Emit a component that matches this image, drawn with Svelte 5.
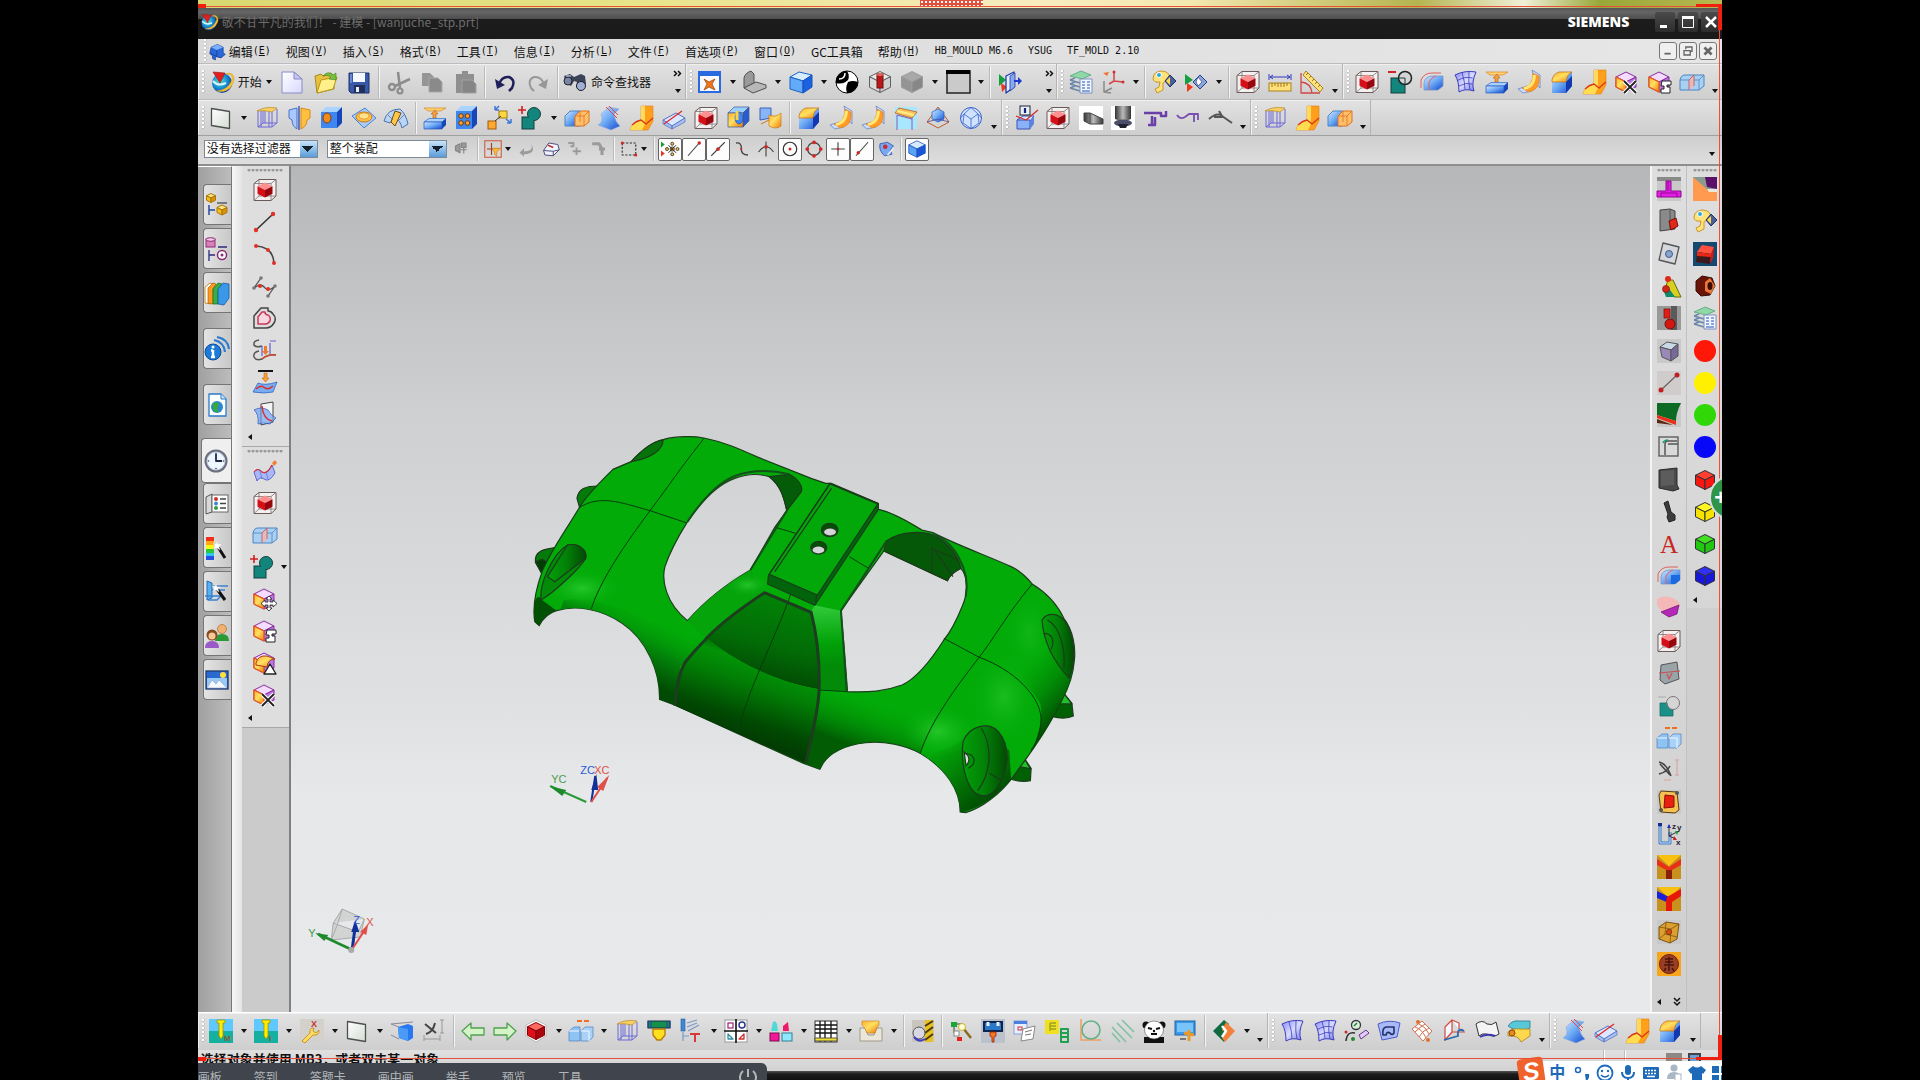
<script>
  const P = (d, f = 'none', s = 'none', w = 1) =>
    `<path d="${d}" fill="${f}" stroke="${s}" stroke-width="${w}" stroke-linejoin="round"/>`;
  const C = (x, y, r, f = 'none', s = 'none', w = 1) =>
    `<circle cx="${x}" cy="${y}" r="${r}" fill="${f}" stroke="${s}" stroke-width="${w}"/>`;
  const R = (x, y, w, h, f = 'none', s = 'none', sw = 1) =>
    `<rect x="${x}" y="${y}" width="${w}" height="${h}" fill="${f}" stroke="${s}" stroke-width="${sw}"/>`;
  const E = (x, y, a, b, f = 'none', s = 'none', w = 1) =>
    `<ellipse cx="${x}" cy="${y}" rx="${a}" ry="${b}" fill="${f}" stroke="${s}" stroke-width="${w}"/>`;
  const T = (x, y, t, f, size = 8) =>
    `<text x="${x}" y="${y}" fill="${f}" font-size="${size}">${t}</text>`;

  // Isometric cube: centre, half width, then top / left / right colours
  const cube = (x, y, w, t, l, r, s = 'none') =>
    P(`M${x - w} ${y - w / 2}L${x} ${y - w}L${x + w} ${y - w / 2}L${x} ${y}Z`, t, s) +
    P(`M${x - w} ${y - w / 2}L${x} ${y}V${y + w}L${x - w} ${y + w / 2}Z`, l, s) +
    P(`M${x + w} ${y - w / 2}L${x} ${y}V${y + w}L${x + w} ${y + w / 2}Z`, r, s);

  // Oblique box: origin, width, height, depth
  const box = (x, y, w, h, d, f, t, r, s = 'none') =>
    P(`M${x} ${y}L${x + d} ${y - d}H${x + w + d}L${x + w} ${y}Z`, t, s, 0.7) +
    P(`M${x + w} ${y}L${x + w + d} ${y - d}V${y + h - d}L${x + w} ${y + h}Z`, r, s, 0.7) +
    R(x, y, w, h, f, s, 0.7);

  const wireRed = P('M1 5.500L6 1.500H23V18L18 22.500H1Z', '#f4f0f0', '#6a5a5a') + P('M1 5.500H18V22.500M18 5.500L23 1.500M6 1.500V18H23M6 18L1 22.500', 'none', '#7d7070', 0.8) +
    cube(12, 12, 7.5, '#ff8f8f', '#d50f18', '#98060d');
  const disk = P('M1 16L6 12.500H23L19 16Z', '#a9d2ff', '#3569c8', 0.7) + P('M1 16H19V23H1Z', 'url(#g-blue)', '#2858c0', 0.7) + P('M19 16L23 12.500V19L19 23Z', '#1747b8');
  const orangeCube = cube(11, 12, 10, '#f3dcff', '#ffb52b', '#b77ae0', '#8a2aa0') + P('M1 7L11 12V22L1 17Z', 'url(#g-orange)', '#e4581a', 1.3);
  const boot = P('M11 0H23V15L18 24H0Q2 16 11 14Z', '#ffa01c', '#e08010', 0.6) + P('M11 0H15V16L11 14Z', '#ffd95a') + P('M0 24Q2 16 11 14L15 18L12 24Z', '#ffdc50') + P('M2 19Q6 15 11 14L16 18L23 12', 'none', '#d9381a', 1.3);
  const mesh = (n) => P('M2 5Q12 0 23 2Q18 13 21 21Q12 18 6 22Q6 11 2 5Z', 'url(#g-mesh)', '#3c3cb8') + P(n ? 'M9 2.500Q12 12 12 19.500M16 2Q15 12 17 20M4.500 10.500Q12 6 19.500 8M6 16Q13 12 19 14' : 'M9 3Q12 12 12 20M16 2Q15 12 17 20', 'none', '#3c3cb8', 0.8);
  const sweep = P('M0 19L9 16L14 21L5 23Z', '#c8dcff', '#5a7cc0', 0.7) + P('M14 0L22 5V18L17 12Z', '#c8dcff', '#5a7cc0', 0.7) + P('M4 18Q15 17 15 3L21 6Q23 20 10 22Z', '#ff9a28', '#d87818', 0.5) + P('M6 18.500Q16 17 16.500 5', 'none', '#ffe870', 3);
  const blend = P('M2 8Q4 3 9 2H22V16L16 23H2Z', 'url(#g-blue)') + P('M2 10Q3 4 9 2H22Q17 4 16 12H2Z', 'url(#g-orange)', '#bd6c14', 0.7) + P('M16 12L22 6V16L16 23Z', '#1238b0');
  const wireCol = P('M3 5V21H17V5M8 3V17H22V3M3 21L8 17M17 21L22 17M6 5V21M10 5V17M14 5V21', 'none', '#6a6ad8') + P('M2 5Q10 0 22 2L17 6Q9 4 2 5Z', '#f8cf60', '#b88a28', 0.7);
  const layers = P('M1 6L12 1L22 5L13 9Z', '#8fd8a8', '#4a9a70', 0.7) + P('M1 10L6 8M1 14L6 12M1 18L6 16M1 10L11 13M1 14L11 17M1 18L11 21', 'none', '#6a86a8', 1.4) + P('M11 9H23V23H11Z', '#f0f6ff', '#7a90c0') + P('M13 12H16M18 12H21M13 15H16M18 15H21M13 18H16M18 18H21M13 21H21', 'none', '#6a8ad0', 1.3);
  const key = P('M1 8Q2 1 10 1Q19 2 17 9Q13 11 11 13L11 20L5 23L3 19L7 17L8 12Q1 13 1 8Z', '#ffe27a', '#c8962a') + C(7, 5, 2.5, '#2aa8d8', '#fff') + P('M13 11L18 5L24 11L18 17Z', '#4a5f98', '#22306a') + P('M14 11L18 7V15Z', '#ffd94d');
  const union = C(15, 8, 6.5, '#12857c', '#173e3c') + R(3, 11, 12, 12, '#12857c', '#173e3c') + P('M10 11H15V14', 'none', '#12857c', 2);
  const boxSplit = P('M0 10Q1 5 5 5H24V16L19 20H0Z', '#a9d0f2', '#4b86c2') + P('M0 10H19V20M19 10L24 5', 'none', '#4b86c2', 0.8) + P('M9 20V10L14 5V16', '#e8b9b9', '#c05050', 0.8);
  const boxPair = P('M0 10L5 5H15V20H0Z', 'url(#g-blue)', '#4b86c2') + P('M10 10L15 5H24V16L19 20H10Z', '#ffbf6a', '#e0701c') + P('M10 10H19V20M19 10L24 5M15 5V16', 'none', '#e0701c', 0.8);
  const draft = P('M4 8L12 1L22 3L17 8Q18 16 23 20L14 24L1 19Q7 16 4 8Z', 'url(#g-blue)', '#8aa8d8', 0.6) + P('M9 1L20 12M12 0L21 9', 'none', '#e04848');
  const trim = P('M1 14L14 7L23 12L10 20Z', '#dce8ff', '#5070c0') + P('M1 14L10 20V23L1 18ZM23 12V16L10 23V20Z', '#a8c0f0', '#5070c0', 0.7) + P('M2 18L20 5', 'none', '#e02828', 1.3);
  const round = P('M4 13Q5 6 13 6H23V16L18 20H4Z', 'url(#g-blue)', '#7894c8', 0.8) + P('M1 18V10Q4 3 12 3H21M9 20V12Q12 7 16 6', 'none', '#e06060');
  const sheet = P('M2.500 2.500L20.500 5.500V22.500L2.500 19.500Z', 'url(#g-sheet)', '#4c514e', 1.3);
  const extrude = P('M1 2H23L18 5H5Z', '#ffd070', '#d88a2a', 0.7) + P('M10 12V8H8L12 4L15 8H13V12Z', '#f0a040', '#b86018', 0.6) + disk;
  const blue3 = cube(12, 12, 11, '#d4eaff', '#5aa2f8', '#1c56d8', '#1c4fb8');
  const flow = (a) => R(0, 0, 24, 24, '#5ec8ff') + R(0, 12, 24, 12, '#16b0a0') + P('M8 1H16V4H14V17L12 20L10 17V4H8Z', '#ffee00', '#a09000', 0.8) + T(15, 22, a, '#8a5a30', 8);
  const disc = (c) => C(12, 12, 11, c);
  const solid = (c, t) => cube(12, 12, 9.5, t, c, c, '#30303a');
  const plate = '#c9c9c9';

  const icons = {
    nx: E(12, 13, 10, 10, 'url(#g-globe)') + P('M3 2L15 3L10 13Z', '#e02020', '#a01010', 0.6) + P('M16 4Q25 4 21 12Q17 20 7 21Q14 23 20 18Q27 9 22 4Q19 2 16 4Z', '#f6c33a', '#d89a1a', 0.5) + P('M3 11Q8 17 16 13', 'none', '#d8f4ff', 2),
    part: P('M3 6L12 2L20 6V14L23 16L17 21L9 19V24L5 22V18L1 15Z', '#2a68d8', '#123a90') + P('M3 6L12 2L20 6L11 10Z', '#7ab0ff') + P('M11 10V19L3 15', 'none', '#123a90'),
    newdoc: P('M2 2H14L22 9V23H2Z', 'url(#g-doc)', '#8a8ac8') + P('M14 2V9H22Z', '#c4c4f0', '#8a8ac8'),
    open: P('M1 6L7 4L9 6L17 3L20 7V19L3 23Z', '#e8c040', '#a88a1a') + P('M3 23L7 10L23 7L19 19Z', '#fff08a', '#b8961a') + P('M9 6Q14 0 19 5L22 3V10L15 9L17 7Q13 4 9 6Z', '#7ac040', '#3e8020', 0.6),
    save: P('M2 3H22V23H4L2 21Z', '#3858a8', '#1c2f6a') + R(6, 3, 12, 9, '#f4f8ff') + R(7, 15, 11, 8, '#20305a') + R(9, 17, 3, 5, '#e8eef8') + P('M4 4V13', 'none', '#7a9ae0', 1.5),
    cut: C(5, 17, 3, 'none', '#8c8c8c', 2.400) + C(13, 21, 2.500, 'none', '#8c8c8c', 2.200) + P('M11 2L13 18M23 9L8 16', 'none', '#8c8c8c', 2.500),
    copy: P('M2 3H10L14 7V16H2Z', '#959595') + P('M9 8H18L22 12V22H9Z', '#8a8a8a', '#a8a8a8'),
    paste: P('M3 4H9V1H15V4H21V23H3Z', '#8f8f8f') + P('M9 10H19L23 14V23H9Z', '#858585', '#a0a0a0'),
    undo: P('M6 14Q9 6 16 7Q23 10 19 18L16 21', 'none', '#1f1f5a', 2.500) + P('M2 9L4 19L12 15Z', '#1f1f5a'),
    redo: P('M18 14Q15 6 8 7Q1 10 5 18L8 21', 'none', '#979797', 2) + P('M22 9L20 19L12 15Z', '#979797'),
    binoc: P('M1 6L7 4L11 7L18 4L22 6L23 14L17 21L13 17L14 12L11 11L8 16L3 13Z', '#3c4258') + C(5, 11, 4, '#7a86a8', '#222') + C(18, 16, 4.500, '#9fb0d8', '#222') + P('M3 6L8 6', 'none', '#8a94b8', 2),
    fit: R(1, 2, 21, 20, '#f8faff', '#2a6ae0', 2) + R(1, 2, 21, 4, '#2a6ae0') + P('M6 9L11 12L17 9L14 14L17 20L11 17L6 20L9 14Z', '#f07820', '#a04808', 0.8),
    hinge: P('M1 18V8Q2 3 8 1L11 4V13L1 18Z', '#9a9a9a', '#505050') + P('M1 18L13 12L23 15V18L10 23Z', '#b8b8b8', '#505050'),
    cube: P('M1 7L10 2L23 5L14 11Z', '#d6ecff', '#1c62c8') + P('M1 7L14 11V23L1 19Z', '#63aaf8', '#1c62c8') + P('M14 11L23 5V17L14 23Z', '#1b62e0', '#1c4fb8'),
    ball: C(12, 12, 11, '#fff', '#000') + P('M12 1A11 11 0 0 0 1 13Q8 15 13 10Q15 5 12 1Z', '#000') + P('M23 12A11 11 0 0 1 12 23Q10 18 13 12Q18 10 23 12Z', '#000') + P('M4 9Q10 9 10 3', 'none', '#fff', 1.500),
    section: cube(12, 12, 10.500, '#e8e8e8', '#dadada', '#cfcfcf', '#606060') + R(9, 4, 6, 14, '#b81818', '#701010') + E(12, 4.500, 3, 1.500, '#e86060'),
    ghost: cube(12, 12, 10.500, '#a8a8a8', '#949494', '#878787', '#9c9c9c'),
    frame: R(1, 1, 23, 22, '#cacaca', '#222', 1.500) + R(0, 0, 24, 4, '#000'),
    door: P('M1 4L8 10L1 16Z', '#14a040') + P('M3 13L9 17L4 22Z', '#f03818') + P('M8 6L16 2V17L8 23Z', '#e8f0ff', '#1c3ab0', 1.300) + P('M12 6L17 3V17L12 21Z', '#8aa8f0', '#1c3ab0', 0.800) + P('M16 10H20V7L24 11L20 15V12H16Z', '#1c3ad0'),
    layers,
    axes: P('M13 2V11L22 12M13 11L8 14', 'none', '#d04848', 1.500) + P('M2 3L8 2L6 6Z', '#f07030') + C(13, 2, 1.500, '#d03030') + C(22, 12, 1.500, '#d03030') + P('M3 11V22L11 18M3 22L10 23', 'none', '#8a8a8a', 1.500),
    key,
    play: P('M1 4L9 10L1 15Z', '#14a040') + P('M3 13L9 17L3 22Z', '#f03818') + P('M9 12L16 5L23 12L16 19Z', '#8aa6d8', '#2a3f8a') + P('M14 7L18 12L14 16L12 12Z', '#fff', '#2a3f8a', 0.700),
    redcube: wireRed,
    ruler: R(1, 13, 22, 8, '#ffe07a', '#a8821a') + P('M4 13V17M7 13V16M10 13V17M13 13V17M16 13V17M19 13V16', 'none', '#806010', 0.800) + P('M1 4V10M23 4V10M2 7H22M5 5L2 7L5 9M19 5L22 7L19 9', 'none', '#2a3ac0'),
    angle: P('M1 3V23H20M1 12Q11 13 12 23', 'none', '#d04848', 1.300) + P('M6 1L23 18L20 22L3 5Z', '#ffe07a', '#a8821a') + P('M8 3L6 5M11 6L9 8M14 9L12 11M17 12L15 14M20 15L18 17', 'none', '#806010', 0.800),
    subtract: P('M0 2H8', 'none', '#d02020', 2) + R(3, 8, 14, 15, '#12857c', '#173e3c') + C(17, 8, 6.500, '#d4d4d4', '#222', 1.500) + P('M11 8H17V14', 'none', '#173e3c'),
    round,
    mesh: mesh(true),
    mesh0: mesh(false),
    extrude,
    sweep,
    blend,
    boot,
    delcube: orangeCube + P('M9 11L21 23M21 11L9 23', 'none', '#fff', 4) + P('M9 11L21 23M21 11L9 23', 'none', '#222', 1.800),
    repcube: orangeCube + P('M14 11H23V15H19V17H22V23H13V19H16V16H13Z', '#fff', '#222'),
    movecube: orangeCube + P('M16 9L19 12H17V15H20V13L24 16.500L20 20V18H17V21H19L16 24L13 21H15V18H12V20L8 16.500L12 13V15H15V12H13Z', '#fff', '#222', 0.800),
    facecube: orangeCube + P('M3 12Q5 4 14 5L22 8Q15 8 14 16L3 14Z', 'url(#g-orange)', '#a83a1a') + P('M17 13L23 23H11Z', '#fff', '#222', 1.400),
    boxsplit: boxSplit,
    boxpair: boxPair,
    sheet,
    wirecol: wireCol,
    mirror: P('M1 4L9 2V23Q4 20 4 14L1 12Z', '#a8c8ff', '#4a72c8') + P('M13 2L22 4V12L19 14Q19 20 13 23Z', '#ffc040', '#d88a1a') + P('M11 0V24', 'none', '#2a4ab0', 1.300),
    hole: box(1, 6, 16, 16, 5, '#3f87f0', '#a9d4ff', '#1746b8') + E(7, 12, 4, 5, '#f08a1a', '#8a3a08'),
    emboss: P('M0 10L13 2L24 12L12 22Z', '#a8ccf8', '#4a82d0') + E(12, 11, 8, 5, '#ffbe48', '#c8781a') + E(12, 10, 5, 3, '#ffe48a', '#d89028', 0.700),
    fan: P('M0 15Q3 3 16 3Q22 8 24 18L18 22Q16 14 12 13Q8 13 6 17Z', '#b9d5f5', '#4a72b0') + P('M11 5L17 7L11 20L7 16Z', '#ffc848', '#704a10') + P('M4 9L9 14M20 9L15 14', 'none', '#6a6a88', 0.800),
    pattern: box(1, 5, 16, 18, 5, '#3f87f0', '#a9d4ff', '#1746b8') + C(6, 10, 2.300, '#ffa030', '#703808') + C(12.500, 10, 2.300, '#ffa030', '#703808') + C(6, 17, 2.300, '#ffa030', '#703808') + C(12.500, 17, 2.300, '#ffa030', '#703808'),
    movecopy: R(12, 5, 8, 7, '#ffd840', '#a07a10') + R(1, 15, 8, 8, '#ffa830', '#a05a10') + P('M8 15L14 10', 'none', '#333') + P('M8 4L12 0M8 4V0M8 4H12M19 13L24 17M24 17V13M24 17H20', 'none', '#3a78d8', 1.500),
    union: P('M3 0V8M-1 4H7', 'none', '#d02020', 1.600) + union,
    draft,
    trim,
    tank: box(1, 7, 15, 14, 6, 'url(#g-orange)', '#9ad0ff', '#2a5ad0', '#405a90') + E(12, 12, 4, 6, '#3f87f0', '#2a4a98', 0.700) + P('M10 5V14', 'none', '#ffd040', 3),
    wrap: P('M1 2H12V12L1 14Z', '#8ab4f8', '#3a62b8') + P('M10 9Q17 12 22 7V20Q17 24 10 20Z', 'url(#g-orange)', '#c8781a', 0.700) + P('M2 18L10 14', 'none', '#c8781a'),
    fold: R(1, 1, 22, 22, '#a8e8ff') + P('M1 7L5 2L23 6L18 12Z', '#ffc060', '#b8601a', 0.800) + P('M3 9V24M18 12V24M3 9L18 13', 'none', '#8a5ab0') + P('M3 5L20 9', 'none', '#fff080', 2),
    pyramid: P('M12 1L23 16L12 22L1 16Z', 'none', '#c05a30') + P('M6 6L12 3L18 6V13L12 16L6 13Z', 'url(#g-blue)', '#2858c0', 0.700) + P('M1 16L12 13L23 16', 'none', '#4a4a90', 0.800),
    gem: C(12, 12, 10.500, '#cfe2ff', '#3a62c8') + P('M12 1.500L5 8L12 13L19 8ZM5 8L4 17L12 22.500L20 17L19 8M12 13V22.500M1.500 12L5 8M22.500 12L19 8', 'none', '#3a62c8', 0.800),
    inspect: P('M3 14L9 10H20L16 15Z', '#dce6ff', '#3a52b8') + P('M3 14H16V23H3Z', '#8ab0f8', '#3a52b8') + P('M16 15L20 10V18L16 23Z', '#5a84e0') + P('M2 10L12 14L24 4', 'none', '#d03030', 1.300) + R(6, 0, 10, 9, '#e8f0f8', '#223') + P('M11 2V7', 'none', '#14207a', 2.200),
    nozzle: R(0, 0, 24, 24, '#fff') + P('M5 7H11L24 13V18H11L5 15Z', 'url(#g-steel)', '#444') + P('M11 7V17', 'none', '#444'),
    punch: R(0, 0, 24, 24, '#fff') + P('M4 0H20V13Q12 17 4 13Z', 'url(#g-steel)') + E(12, 17, 9, 3.500, '#4a4e68') + P('M7 18H17L15 22H9Z', '#20222e'),
    clampa: P('M1 7H18V10H23V5M9 10V19M5 19H12V11', 'none', '#6a3fa8', 2.500),
    clampb: P('M1 9Q4 14 9 11L13 8H22V14M18 8V16', 'none', '#7a4fb0', 1.800),
    clampc: P('M1 13Q9 6 14 10L24 17M11 5L14 10M6 11L16 11', 'none', '#555', 2),
    assy: cube(6, 5, 4.500, '#ffe680', '#f8bc20', '#d8940a', '#a8760a') + P('M4 12V22M4 17H10', 'none', '#2a4aa0', 1.500) + cube(17, 17, 5, '#ffe680', '#f8bc20', '#d8940a', '#a8760a') + P('M12 10H22', 'none', '#222'),
    constr: R(1, 2, 9, 8, '#d880b8', '#8a2a70') + E(5.500, 2.500, 4.500, 1.800, '#f8c8e8', '#8a2a70') + P('M4 13V24M4 18H10M13 10H22', 'none', '#2a2a80', 1.300) + C(17, 18, 4.500, '#fff', '#8a2a70', 1.500) + C(17, 18, 1.500, '#8a2a70'),
    books: P('M0 6L5 2L8 3L6 8V23L0 22Z', '#fff', '#c88a2a') + P('M3 7L8 2L11 3L8 8V23L3 22Z', '#ff9a20', '#b05a08', 0.700) + P('M8 8L13 2L17 3L13 9V23L8 23Z', '#38b048', '#146a20', 0.700) + P('M13 8L18 2L24 3V17L19 24L13 23Z', '#3a98e8', '#1050a0', 0.700),
    news: C(8, 15, 8, '#1c7ad8', '#0c4a98') + P('M8 13V20M6 20H10M6 13.500H8', 'none', '#fff', 2.500) + C(8, 10, 1.500, '#fff') + P('M9 3Q19 5 20 15M12 0Q23 2 24 12', 'none', '#2a7ad0', 2.200),
    web: P('M4 1H16L21 6V23H4Z', '#fff', '#2a7ac8', 1.300) + P('M16 1V6H21', '#cfe4ff', '#2a7ac8') + C(12, 14, 6, '#2a88d0') + P('M8 10Q12 8 14 11L12 16L14 19Q10 20 8 17Z', '#38a838'),
    clock: C(12, 12, 11.500, '#6a7080') + C(12, 12, 9, '#eef6ff', '#c8d4e4') + P('M12 5V12H18', 'none', '#1c2a48', 1.800) + C(12, 4.500, 0.800, '#445') + C(12, 19.500, 0.800, '#445') + C(4.500, 12, 0.800, '#445') + C(19.500, 12, 0.800, '#445'),
    roles: P('M1 5L7 2V20L1 22Z', '#d8d8d8', '#555') + R(7, 3, 16, 17, '#fff', '#666') + C(11, 7, 2, '#d03030') + C(11, 11.500, 2, '#3a8ad0') + C(11, 16, 2, '#30a040') + P('M15 7H21M15 11.500H21M15 16H21', 'none', '#444', 1.500),
    wand: R(1, 1, 8, 5, '#f03018') + R(1, 5, 8, 4, '#ffa818') + R(1, 9, 8, 4, '#f8f818') + R(1, 13, 8, 4, '#28c838') + R(1, 17, 8, 4, '#28c8f0') + R(1, 20, 8, 4, '#2850e0') + P('M13 11L20 22', 'none', '#111', 3) + P('M12 4L13 8L17 8L14 11L15 14L12 12L8 13L10 10L8 7L11 8Z', '#fff', '#ccc', 0.500),
    wandb: P('M2 1L7 3V18L2 20Z', '#58b0f0', '#2868b0') + P('M7 6H23M7 10H20M0 16H16L12 20H3', 'none', '#3a80d0', 1.500) + P('M12 9L20 20', 'none', '#111', 3) + P('M11 3L12 7H16L13 9L14 12L11 10L8 12L9 8L7 6H10Z', '#fff', '#ccc', 0.500),
    people: C(17, 5, 4.500, '#f0b070', '#a06020', 0.600) + P('M10 17Q10 10 17 10Q24 10 24 17Z', '#2a9a38') + C(7, 11, 5.500, '#8a4a20') + C(7, 12, 3.500, '#f6c898') + P('M0 24Q0 17 7 17Q14 17 14 24Z', '#9a5ac8'),
    photo: R(1, 3, 22, 18, '#2a6ad0', '#223a6a', 1.300) + R(2, 10, 20, 10, '#9ac8f4') + C(18, 7, 3, '#ffe040') + P('M2 20L7 12L11 16L14 12L22 20Z', '#f4f8ff', '#8aa0c0', 0.600),
    line: P('M3 20L20 4', 'none', '#333', 1.600) + C(3, 20, 2.200, '#e03028') + C(20, 4, 2.200, '#e03028'),
    arc: P('M3 4Q20 5 21 21', 'none', '#444', 1.500) + C(3, 4, 2, '#e03028') + C(15, 8, 2, '#e03028') + C(21, 21, 2, '#e03028'),
    spline: P('M1 14L8 4M1 14L6 11Q10 11 12 14Q16 18 22 12M15 22L22 12', 'none', '#555', 1.300) + C(1, 14, 1.800, '#777') + C(8, 4, 1.800, '#777') + C(15, 22, 1.800, '#777') + C(22, 12, 1.800, '#777') + C(7, 12, 2, '#e03028') + C(15, 15, 2, '#e03028'),
    offset: P('M1 10L8 2H15V5Q18 5 20 8Q24 12 21 17Q18 22 13 22H1Z', 'none', '#444', 1.500) + P('M5 11L9 6H12Q12 9 15 9Q18 11 17 15Q15 18 12 18H5Z', '#f8d8e0', '#c83858', 1.500),
    bridge: P('M6 2Q0 3 1 7Q3 10 9 8M6 13Q0 14 1 19Q3 23 9 21Q15 16 23 17', 'none', '#555', 1.500) + P('M9 8V18M17 5V16M17 3H23', 'none', '#6060d8', 1.200) + P('M9 21Q15 16 23 17', 'none', '#e04828', 1.300) + P('M11 8H14V13H16L12.500 17L9 13H11Z', '#f07828'),
    project: P('M5 1H20', 'none', '#111', 2) + P('M11 3H14V8H16L12.500 12L9 8H11Z', '#f8a030', '#b05a10', 0.500) + P('M5 13Q12 16 24 12L20 22Q12 24 0 22Z', '#78aef0', '#2858c0', 0.700) + P('M3 19Q8 14 12 18Q16 20 20 16', 'none', '#d83030', 1.500),
    section2: P('M8 2L20 0V20L8 23Z', '#f4f4f4', '#444') + P('M1 8Q8 4 15 8Q18 14 23 16L17 22Q10 20 5 22Q6 12 1 8Z', '#6aa0f0aa', '#2858c0', 0.700) + P('M9 4Q10 17 19 19', 'none', '#d83030', 1.500),
    ribbon: P('M1 13Q5 8 9 13Q14 16 19 6L22 14Q16 24 11 20Q7 17 4 22Z', '#a9b9f8', '#5a6ad0') + P('M1 13Q5 8 9 13Q14 16 19 6', 'none', '#d83030', 1.200) + P('M19 4L22 1L24 4L21 7Z', '#f08030') + P('M7 12L9 20M13 13L15 20', 'none', '#5a6ad0', 0.700),
    // right-hand mould tools
    railm: R(0, 0, 24, 24, plate) + R(0, 0, 24, 4, '#8a8a8a') + P('M9 4H14V14H24V20H0V14H9Z', '#e81ce8', '#8a0c8a') + P('M4 20V16H20V20M11 4V14', 'none', '#8a0c8a'),
    postm: P('M3 1L13 0L18 2V20L3 22Z', '#8a8a8a', '#444') + P('M13 0V21', 'none', '#555') + P('M12 12L19 9L21 17L14 21Z', '#e02818', '#7a0c08'),
    platem: P('M6 1L22 5L18 22L2 18Z', '#d4d8dc', '#555', 1.300) + C(12, 12, 3.500, '#88a4cc', '#445a88'),
    pinm: P('M11 6L16 6L24 23H17L9 12Z', '#d8d020', '#6a6a10') + P('M6 15L11 13L18 23H9Z', '#108a6a') + C(11, 5, 3, '#e02818') + C(9, 15, 3.500, '#d02818', '#7a0c08', 0.600),
    slidem: R(0, 0, 24, 24, '#999') + P('M14 0H20V24H14Z', '#5a5a5a') + R(7, 3, 6, 9, '#e02018', '#7a0c08', 0.700) + C(13, 18, 5, '#d01810', '#7a0c08'),
    blockm: R(0, 0, 24, 24, plate) + P('M3 8L10 3L21 5L14 11Z', '#c8d8e4', '#555') + P('M3 8L14 11V22L5 18Z', '#9a88b8', '#555') + P('M14 11L21 5V17L14 22Z', '#7a689a', '#555'),
    linem: R(0, 0, 24, 24, '#d0cccc') + P('M4 19L20 4', 'none', '#666', 1.300) + C(4, 19, 2.500, '#c02020') + C(20, 4, 2.500, '#c02020'),
    greenm: R(0, 0, 24, 24, plate) + P('M0 0H24Q19 10 19 18L0 12Z', '#0c6a24') + P('M0 12L19 18V22L0 15Z', '#e83018') + P('M0 16L16 22L0 20Z', '#5a2a10'),
    cornerm: R(2, 2, 19, 19, 'none', '#555', 1.300) + P('M8 20V9Q8 6 11 6H20M11 9H21', 'none', '#555', 1.500) + P('M6 8Q7 5 11 5', 'none', '#14a080', 1.500),
    darkm: P('M2 2L20 0V17L22 21L16 23L2 20Z', '#4a4a4a', '#2a2a2a') + P('M4 3L17 2V17L4 18Z', '#5c5c5c'),
    hammerm: P('M7 3L11 1L14 12L18 15V20L12 22L10 17L11 14Z', '#3c3c3c', '#222'),
    textm: `<text x="3" y="21" font-family="Liberation Serif" font-size="25" font-weight="normal" fill="#c82820">A</text>`,
    roundm: round + P('M14 11H23V16L18 20H14Z', '#1c6ae0'),
    wedgem: P('M0 2Q10 -4 22 5L23 10L6 16L0 8Z', '#f4b8b8') + P('M4 15L22 8L20 17L12 20Z', '#b428b8', '#6a1070', 0.700),
    wirebox: P('M4 4L20 1L22 18L8 23L3 19Z', '#9aa4a8', '#555') + P('M2 12L23 10M10 13L12 18L15 12', 'none', '#c85050', 1.200),
    cutm: P('M1 3H9', 'none', '#aaa') + P('M3 9H10A7 7 0 0 0 16 16V22H3Z', '#1b9088', '#1a6a64', 0.800) + C(16, 9, 6.500, 'none', '#777'),
    splitm: P('M8 2H13M15 2H20', 'none', '#f07020', 2) + P('M0 12L5 8H11V22H0Z', '#8ec4f4', '#4a80c0', 0.700) + P('M12 12L16 8H24V18L20 22H12Z', '#a9d2f8', '#4a80c0', 0.700) + P('M0 12H10M12 12H20V22', 'none', '#f4f8ff'),
    trimm: P('M2 4Q9 5 14 18M2 16Q10 14 13 8M3 6L13 17', 'none', '#444', 1.600) + P('M20 2V17M18 2H22M18 17H22M7 22H14', 'none', '#d8a0a0'),
    framem: R(0, 0, 24, 24, plate) + P('M4 1L20 2L22 20L18 23L4 22L2 5Z', '#f4c050', '#5a3a10') + P('M8 5L17 6V17L7 18Z', '#e82010', '#8a1008') + C(4, 20, 2, '#555') + C(20, 3, 2, '#555'),
    csysm: P('M3 1V20H13V9', 'none', '#3a7ac0', 3) + P('M3 4V20H13V9', 'none', '#cfe0f4', 1) + R(1, 0, 4, 3, '#1a2a90') + P('M12 13V2M12 13L20 9M12 13L19 16', 'none', '#333') + P('M12 1L10 5H14Z', '#2030c0') + P('M22 8L18 8L20 12Z', '#20a030') + P('M20 17L17 13L16 17Z', '#d02020') + T(15, 6, 'z', '#223', 8) + T(20, 7, 'y', '#223', 8) + T(19, 22, 'x', '#223', 8),
    ym: R(0, 0, 24, 24, '#c8901c') + P('M0 0H24L12 11Z', '#f8c010') + P('M0 4L12 12L24 4V10L15 15V24H9V15L0 10Z', '#e83018') + R(9, 15, 6, 9, '#8a2008'),
    ymb: R(0, 0, 24, 24, '#c8901c') + P('M0 0H24L12 11Z', '#f8c010') + P('M0 4L12 10V16L0 11Z', '#1c20d8') + P('M10 10L24 2V9L15 15V24H9V14Z', '#e81808'),
    cratem: R(0, 0, 24, 24, plate) + P('M2 7L9 2L22 4L20 19L13 23L2 19Z', '#dca030', '#7a5410') + P('M2 7L14 9L22 4M14 9L13 23M9 2L8 14L2 19M8 14L20 17', 'none', '#7a5410', 0.800) + C(12, 12, 2.500, '#e05010', '#8a2a08'),
    sealm: R(0, 0, 24, 24, '#f8a41c') + C(12, 12, 9.500, '#9a3f24', '#6a2010') + P('M8 7H16M12 5V13M8 10H16M7 13H17M9 16L7 19M15 16L17 19M12 14V19', 'none', '#4a160c', 1.500),
    wedge: R(0, 0, 24, 24, '#8a9a90') + P('M0 0L16 14H24V24H0Z', '#ff9a50') + P('M12 0H24V12L14 10Z', '#5a1068') + P('M14 12H24V15H16Z', '#e8e8e0'),
    key2: key,
    redsolid: R(0, 0, 24, 24, '#144a70') + P('M4 10L9 3L21 5L18 12Z', '#ff5040') + P('M4 10L18 12L17 22L3 20Z', '#3a1a1c') + P('M18 12L21 5L20 16L17 22Z', '#e01810') + P('M4 10L18 12V15L4 14Z', '#e82818'),
    ringsolid: P('M3 7L9 2L19 4L22 12L17 21L8 22L3 17Z', '#6a1408', '#3a0c04') + P('M12 8L17 4L22 12L18 20L12 17Z', '#e87838') + E(17, 12, 2.500, 4, '#3a0c04'),
    layers2: layers,
    red: disc('#ff1808'), yellow: disc('#fff000'), green: disc('#30d808'), blue: disc('#0808f8'),
    cred: solid('#f81810', '#ff4030'), cyel: solid('#f4e400', '#fff820'), cgrn: solid('#20c810', '#40e020'), cblu: solid('#1818d8', '#3030f0'),
    // bottom bar
    flowm: flow('M'), flowi: flow('I'),
    wrenchx: R(0, 0, 24, 24, '#d4d0cc') + P('M2 22L10 14Q9 9 14 9L13 12L16 14L19 11Q19 17 13 16L5 24Z', '#ffdc60', '#c8962a') + T(11, 8, 'X', '#c83030', 9),
    bluewire: P('M1 5L23 3M1 16L9 20M1 5L9 8', 'none', '#8a8a9a') + P('M8 8L18 5L23 7V19L18 22L9 19Z', '#2a78f0') + P('M8 8L18 10V22L9 19Z', '#4a9af8'),
    trimdim: P('M3 5L14 14M4 15Q11 13 13 4', 'none', '#444', 2) + P('M20 1V14M18 1H22M18 14H22M2 16V22M18 16V22M2 20H18', 'none', '#999'),
    prev: P('M1 12L10 4V9H23V16H10V21Z', '#d4f4c8', '#50a050', 1.300),
    next: P('M23 12L14 4V9H1V16H14V21Z', '#d4f4c8', '#50a050', 1.300),
    redhex: P('M12 1L22 6V17L12 23L2 17V6Z', '#fff', '#999', 0.600) + cube(12, 12, 8.500, '#ff6a60', '#e01018', '#a8060c', '#8a0008'),
    screw: R(1, 2, 22, 7, '#14904c', '#14304c') + P('M1 2V9M4 2V9M20 2V9M23 2V9', 'none', '#2a3ab0') + P('M6 10H18V16L14 21H10L6 16Z', '#ffe020', '#b87808', 1.300),
    treet: R(2, 0, 4, 12, '#3a88d8', '#2a5a98', 0.600) + P('M4 13V22M4 17H10M8 4L18 1M8 8L18 4M9 12L20 6', 'none', '#7a9ac8', 1.200) + P('M11 15H21M16 15V23', 'none', '#d83838', 2),
    quad: R(1, 1, 22, 22, '#fff', '#999') + P('M12 0V24M0 12H24', 'none', '#111', 1.600) + R(4, 4, 5, 5, 'none', '#a03080', 1.300) + C(18, 6, 3, 'none', '#2a3a90', 1.500) + P('M4 20V15L9 20Z', 'none', '#2a90a0', 1.300) + P('M15 20L20 15V20Z', 'none', '#d03030', 1.300),
    cores: P('M2 12L4 3Q6 1 8 5L9 12Z', '#50d8d8') + P('M14 12V7L19 3L20 12Z', '#f01868') + R(1, 14, 9, 8, '#f01898', '#800850') + R(13, 14, 10, 8, '#90e8ff', '#308090'),
    table: R(1, 2, 22, 21, '#fff', '#333') + P('M1 6H23M1 10H23M1 14H23M6 2V23M11 2V23M17 2V23', 'none', '#111', 1.300) + P('M1 19H23V22H1Z', '#f0e030', '#554'),
    cavity: P('M1 9H6L9 16H15L18 9H23V22H1Z', '#eae6da', '#a09a8a') + P('M3 2H20V6Q17 9 16 14H8Q6 8 3 6Z', 'url(#g-orange)', '#c8781a', 0.600),
    drill: R(1, 1, 22, 22, '#c9c4bc') + P('M14 1H22V23H14Z', '#e8c020') + P('M14 7L22 2M14 14L22 8M14 21L22 15', 'none', '#4a3a08', 2) + C(8, 14, 6, '#d8d8e4', '#555') + P('M3 18Q8 24 14 20', 'none', '#4040c0', 2),
    nodes: R(2, 3, 6, 5, '#18a838') + P('M5 8V14H9M8 5H14', 'none', '#444') + R(5, 12, 5, 5, '#fff', '#888') + R(8, 18, 5, 4, '#e82018') + P('M14 9L22 19', 'none', '#8a6a20', 2.500) + C(13, 8, 3.500, '#ffffd0', '#c8b040'),
    mount: R(0, 0, 24, 24, '#bcc2cc') + R(3, 3, 18, 9, '#2a78c8', '#0c2450', 2) + P('M7 3V7M17 3V7', 'none', '#e8f0ff', 3) + P('M9 13H15V17L13 18V23H11V18L9 17Z', '#f07820', '#a02010', 0.800),
    notes: R(1, 2, 13, 13, '#e8f0ff', '#8aa0d8') + R(1, 2, 13, 3, '#4a80e0') + P('M10 10L22 7L20 20L8 22Z', '#fff', '#888') + P('M12 13L19 11M12 16L18 15', 'none', '#777') + R(5, 8, 4, 3, 'none', '#d03030'),
    sizes: R(0, 1, 14, 14, '#f0e020') + P('M5 4H11M5 7H11M5 10H11M5 4V12', 'none', '#9aa020', 1.300) + P('M16 10H23V23H16ZM16 14H23M16 18H23', 'none', '#20a050', 2),
    circ: P('M3 0V21H23', 'none', '#f0a060', 1.500) + C(13, 11, 9, 'none', '#60b088', 1.500),
    hatch: P('M2 8L16 23M7 4L22 19M12 1L24 13M2 14L10 23', 'none', '#7fc0a0', 1.500),
    panda: R(2, 18, 20, 6, '#111') + C(4, 6, 3.500, '#111') + C(20, 6, 3.500, '#111') + E(12, 11, 9.500, 9, '#fff', '#555', 0.600) + P('M6 9L10 10M18 9L14 10M9 15H15', 'none', '#111', 2) + C(12, 12, 1.200, '#111'),
    screen: R(1, 2, 20, 14, '#3a9ae8', '#1c62a8') + R(3, 4, 16, 9, '#78c4f8') + P('M6 20H12', 'none', '#777', 2) + P('M10 14L20 16M15 11V22', 'none', '#e89a28', 3),
    logo: P('M12 1L17 5L12 12L16 16L12 23L1 12Z', '#0f6a40') + P('M14 3L23 12L13 23L10 19L14 14L10 11Z', '#f4803a') + P('M10 7L14 12L10 18', 'none', '#fff', 2.500),
    sketch: C(11, 6, 4.500, '#d8f0d8', '#334', 1.300) + P('M9 7L12 4', 'none', '#20802a', 1.500) + P('M1 22Q2 12 10 14', 'none', '#333', 1.500) + C(8, 20, 2, '#208a30') + C(1, 13, 1.500, '#c82828') + P('M14 16L21 11L24 14L16 20Z', '#e8c8f8', '#5a3a90'),
    patch: P('M1 5Q12 0 23 4L20 18L5 21Z', '#a9b9f8', '#4a5ad0') + P('M6 16Q5 9 9 8H17V14Q15 17 13 14Q10 12 9 16Z', 'none', '#20306a', 1.600),
    net: P('M2 10L12 2L22 12L13 22Z', '#fff', '#d07050') + P('M5 8Q12 10 16 19M9 5Q16 8 19 15M5 13Q10 8 15 5M9 18Q12 12 19 9', 'none', '#d07050') + C(8, 3, 2, '#e07030') + C(18, 21, 2, '#e07030'),
    cross: P('M3 8L10 1V13L3 21ZM10 13H23M10 1L17 4V10', '#f4f8ff', '#d04a40', 1.200) + P('M2 21L16 17Q15 8 22 12', 'none', '#2a68b0', 1.800),
    flag: P('M1 5Q7 0 12 5Q17 7 21 3L24 15Q18 19 12 15Q7 14 4 17Z', '#f4f4f4', '#333') + P('M5 18Q12 14 20 17', 'none', '#3a3ab0', 2),
    roll: P('M1 7Q5 1 12 2H23V9L16 12Q6 11 1 7Z', '#58c8d8', '#2a7a90', 0.800) + P('M1 13Q5 9 13 10H23V17L14 23Q12 16 1 17Z', '#ffd850', '#a8801a', 0.800) + C(5, 14, 3, '#e88a20', '#8a4a10'),
    // selection bar
    funnel: P('M2 8L8 5V17L2 14ZM10 4H16V10H10ZM9 13H17M13 10V18', '#9a9a9a', '#858585', 1.500),
    pick: R(1, 1, 22, 22, 'none', '#d06048', 1.500) + P('M10 4V20M4 12H20', 'none', '#a03828', 1.500) + P('M10 11H22L17 16V22L14 19V16Z', '#ffb830', '#a8680a', 0.600),
    back: P('M17 5Q22 15 8 15V11L2 17L8 22V19Q26 18 17 5Z', '#9c9c9c'),
    eraser: P('M2 14L9 4L21 6L23 13L15 21L4 20Z', '#f0f4ff', '#4a4a78', 1.300) + P('M2 14L15 15L23 13M15 15V21', 'none', '#4a4a78', 1.300) + P('M8 7L15 10', 'none', '#c03030', 2),
    stepa: P('M3 4H10V9M14 10V20M9 15H20M10 9L6 8', 'none', '#9a9a9a', 2.500),
    stepb: P('M3 5H12L16 12V20M12 12H20', 'none', '#9a9a9a', 4),
    marquee: `<rect x="3" y="4" width="18" height="16" fill="none" stroke="#333" stroke-width="1.500" stroke-dasharray="3 2"/>` + C(3, 4, 2, '#d02828') + C(21, 20, 2, '#d02828'),
    snap: P('M0 2L5 6L0 10Z', '#14a030') + P('M0 14L5 18L0 22Z', '#f03020') + C(15, 12, 2.800, '#f0b020', '#222') + C(15, 5, 2, '#f0c040', '#222') + C(15, 19, 2, '#f0c040', '#222') + C(8, 12, 2, '#f0c040', '#222') + C(22, 12, 2, '#f0c040', '#222') + P('M10 7L20 17M20 7L10 17', 'none', '#222', 1.300),
    end: P('M4 21L19 4', 'none', '#444', 1.500) + C(19, 4, 2.300, '#c82828'),
    mid: P('M3 21L21 3', 'none', '#444', 1.500) + C(12, 12, 2.500, '#c82828'),
    ctrl: P('M4 4Q12 3 11 12Q11 20 20 20', 'none', '#444', 1.800) + C(11, 12, 1.500, '#c82828'),
    inter: P('M12 2V22M2 16Q12 2 22 16', 'none', '#444', 1.500) + C(12, 9, 2.500, '#c82828'),
    centre: C(12, 12, 9, 'none', '#333', 1.600) + C(12, 12, 2, '#c82828'),
    quadrant: C(12, 12, 8.500, 'none', '#444', 1.600) + C(12, 3, 2.500, '#d02828') + C(12, 21, 2.500, '#d02828') + C(3, 12, 2.500, '#d02828') + C(21, 12, 2.500, '#d02828'),
    exist: P('M12 3V21M3 12H21', 'none', '#444', 1.500) + C(12, 12, 1.800, '#c82828'),
    oncurve: P('M4 21L20 3', 'none', '#444', 1.500) + C(7, 17, 2.300, '#c82828'),
    onface: P('M4 5L14 3L22 8Q16 12 20 19L10 21Q2 14 4 5Z', '#78a8f0', '#2a4aa8') + C(11, 9, 3, '#d02828') + P('M14 20L22 11', 'none', '#e8f0ff', 2),
    solidsel: blue3
  };

  const menus = [['编辑', 'E'], ['视图', 'V'], ['插入', 'S'], ['格式', 'R'], ['工具', 'T'], ['信息', 'I'], ['分析', 'L'], ['文件', 'F'], ['首选项', 'P'], ['窗口', 'O'], ['GC工具箱'], ['帮助', 'H'], ['HB_MOULD M6.6'], ['YSUG'], ['TF_MOLD 2.10']];

  // Token suffixes: "+" has a drop-down caret, "*" is pressed; "|" separator, "_" spacer, ">" overflow, ">>" overflow with chevrons
  const groups = (...list) => list.map((s) => s.split(' '));
  const main = groups(
    'START newdoc open save | cut copy paste | undo redo | FIND _ >>',
    'fit+ hinge+ cube+ ball section ghost+ frame+ | door _ >>',
    'layers axes+ | key play+ | redcube ruler angle >',
    'redcube subtract round mesh extrude sweep blend boot delcube repcube boxsplit >'
  );
  const feature = groups(
    'sheet+ wirecol mirror hole emboss fan | extrude pattern movecopy union+ boxpair draft boot trim redcube tank wrap | blend sweep sweep fold pyramid gem >',
    'inspect redcube nozzle punch clampa clampb clampc >',
    'wirecol boot boxpair >'
  );
  const bottom = groups(
    'flowm+ flowi+ wrenchx+ sheet+ bluewire trimdim | prev next redhex+ splitm+ wirecol screw treet+ quad+ cores+ table+ cavity+ | drill | nodes mount notes sizes circ hatch panda screen | logo+ >',
    'mesh0 mesh sketch patch net cross flag roll >',
    'draft trim boot blend >'
  );
  const select = 'funnel | pick+ back eraser stepa stepb | marquee+ | snap* end* mid* ctrl inter centre* quadrant exist* oncurve* onface | solidsel*'.split(' ');
  const leftA = 'redcube line arc spline offset bridge project section2'.split(' ');
  const leftB = 'ribbon redcube boxsplit union+ movecube repcube facecube delcube'.split(' ');
  const tabs = [['assy'], ['constr'], ['books'], ['news', 'far'], ['web', 'far'], ['clock', 'on'], ['roles'], ['wand'], ['wandb'], ['people'], ['photo']];
  const rightA = 'railm postm platem pinm slidem blockm linem greenm cornerm darkm hammerm textm roundm wedgem redcube wirebox cutm splitm trimm framem csysm ym ymb cratem sealm'.split(' ');
  const rightB = 'wedge key2 redsolid ringsolid layers2 red yellow green blue cred cyel cgrn cblu'.split(' ');
  const dock = ['画板', '签到', '答题卡', '画中画', '举手', '预览', '工具'];
</script>

{#snippet glyph(name)}
  <svg class="ic" viewBox="0 0 24 24" aria-hidden="true">{@html icons[name]}</svg>
{/snippet}

{#snippet tool(t)}
  {#if t === '|'}
    <span class="sep"></span>
  {:else if t === '_'}
    <span class="space"></span>
  {:else if t === '>' || t === '>>'}
    <button class="more" aria-label="更多">
      {#if t === '>>'}<svg class="chev" viewBox="0 0 9 7"><path d="M1 1L3.500 3.500L1 6M5 1L7.500 3.500L5 6" /></svg>{/if}
      <i class="caret"></i>
    </button>
  {:else if t === 'START'}
    <button class="wide start">{@render glyph('nx')}<span>开始</span><i class="caret"></i></button>
  {:else if t === 'FIND'}
    <button class="wide find">{@render glyph('binoc')}<span>命令查找器</span></button>
  {:else}
    {@const name = t.replace(/[+*]/, '')}
    <button class="tool" class:drop={t.endsWith('+')} class:boxed={t.endsWith('*')} aria-label={name}>
      {@render glyph(name)}
      {#if t.endsWith('+')}<i class="caret"></i>{/if}
    </button>
  {/if}
{/snippet}

{#snippet bar(list, cls)}
  <div class="bar {cls}">
    {#each list as g}
      <div class="group"><span class="grip"></span>{#each g as t}{@render tool(t)}{/each}</div>
    {/each}
  </div>
{/snippet}

<div class="desk">
  <div class="window">
    <div class="wallpaper"><span class="handle"></span></div>

    <header class="title">
      {@render glyph('nx')}
      <h1>敬不甘平凡的我们！ - 建模 - [wanjuche_stp.prt]</h1>
      <strong>SIEMENS</strong>
      <div class="winbtns">
        <button aria-label="最小化"><svg viewBox="0 0 20 20"><path d="M5 13h7v3h-7z" fill="#fff" /></svg></button>
        <button aria-label="最大化"><svg viewBox="0 0 20 20"><path d="M4.500 5.500h11v10h-11z" fill="none" stroke="#fff" /><path d="M4 4h12v3h-12z" fill="#fff" /></svg></button>
        <button aria-label="关闭"><svg viewBox="0 0 20 20"><path d="M5 5L15 15M15 5L5 15" stroke="#fff" stroke-width="2.500" /></svg></button>
      </div>
    </header>

    <nav class="menu">
      <span class="grip"></span>
      {@render glyph('part')}
      <div class="items">
        {#each menus as [label, k]}
          <button>{label}{#if k}<span>(<u>{k}</u>)</span>{/if}</button>
        {/each}
      </div>
      <div class="docbtns">
        <button aria-label="最小化文档"><svg viewBox="0 0 18 18"><path d="M5 12h7" stroke="#666" stroke-width="2" /></svg></button>
        <button aria-label="还原文档"><svg viewBox="0 0 18 18"><path d="M6.500 7V4.500h7v5h-2M4.500 8.500h7v5h-7z" fill="none" stroke="#666" stroke-width="1.500" /></svg></button>
        <button aria-label="关闭文档"><svg viewBox="0 0 18 18"><path d="M5 5L13 13M13 5L5 13" stroke="#666" stroke-width="3" /></svg></button>
      </div>
    </nav>

    {@render bar(main, 'main')}
    {@render bar(feature, 'feature')}

    <div class="selection">
      <select class="filter" aria-label="类型过滤器"><option>没有选择过滤器</option></select>
      <select class="scope" aria-label="选择范围"><option>整个装配</option></select>
      {#each select as t}{@render tool(t)}{/each}
      <i class="caret last"></i>
    </div>

    <main>
      <aside class="rail">
        {#each tabs as [name, kind]}
          <button class={kind} aria-label={name}>{@render glyph(name)}</button>
        {/each}
      </aside>
      <div class="strip"></div>
      <aside class="left">
        {#each [leftA, leftB] as list}
          <div class="vgroup">
            <span class="vgrip"></span>
            {#each list as t}{@render tool(t)}{/each}
            <i class="arrow"></i>
          </div>
        {/each}
      </aside>

      <section class="canvas">
        <svg class="scene" viewBox="291 166 1359 846" role="img" aria-label="车身模型">
          <defs>
            <linearGradient id="g-blue" x1="0" y1="0" x2="1" y2="1"><stop offset="0" stop-color="#d4e8ff" /><stop offset=".5" stop-color="#6aa8f4" /><stop offset="1" stop-color="#1448d0" /></linearGradient>
            <linearGradient id="g-orange" x1="0" y1="0" x2="1" y2="1"><stop offset="0" stop-color="#ffb030" /><stop offset=".45" stop-color="#ffe060" /><stop offset="1" stop-color="#f07808" /></linearGradient>
            <linearGradient id="g-mesh" x1="0" y1="0" x2="1" y2="1"><stop offset="0" stop-color="#8a8aff" /><stop offset=".5" stop-color="#d8dcff" /><stop offset="1" stop-color="#6a70e8" /></linearGradient>
            <linearGradient id="g-sheet" x1="0" y1="0" x2="1" y2="1"><stop offset="0" stop-color="#fff" /><stop offset="1" stop-color="#d4dcd4" /></linearGradient>
            <linearGradient id="g-doc" x1="0" y1="0" x2="1" y2="1"><stop offset="0" stop-color="#fff" /><stop offset="1" stop-color="#d8d8fc" /></linearGradient>
            <linearGradient id="g-steel" x1="0" y1="0" x2="1" y2="0"><stop offset="0" stop-color="#333" /><stop offset=".5" stop-color="#bbb" /><stop offset="1" stop-color="#333" /></linearGradient>
            <radialGradient id="g-globe" cx=".4" cy=".4" r=".7"><stop offset="0" stop-color="#50e8c0" /><stop offset=".5" stop-color="#1a90d8" /><stop offset="1" stop-color="#0c2a80" /></radialGradient>
            <linearGradient id="c-door" gradientUnits="userSpaceOnUse" x1="680" y1="700" x2="590" y2="940"><stop offset="0" stop-color="#025804" /><stop offset=".16" stop-color="#029407" /><stop offset=".4" stop-color="#027e05" /><stop offset=".8" stop-color="#014a02" /><stop offset="1" stop-color="#013c02" /></linearGradient>
            <linearGradient id="c-glass" gradientUnits="userSpaceOnUse" x1="700" y1="530" x2="640" y2="760"><stop offset="0" stop-color="#028207" /><stop offset=".6" stop-color="#026c06" /><stop offset="1" stop-color="#024e04" /></linearGradient>
            <linearGradient id="c-rear" gradientUnits="userSpaceOnUse" x1="350" y1="570" x2="260" y2="740"><stop offset="0" stop-color="#02aa08" stop-opacity="0" /><stop offset=".5" stop-color="#02860a" /><stop offset="1" stop-color="#014a03" /></linearGradient>
            <linearGradient id="c-front" gradientUnits="userSpaceOnUse" x1="980" y1="830" x2="920" y2="980"><stop offset="0" stop-color="#02aa08" stop-opacity="0" /><stop offset="1" stop-color="#015c04" /></linearGradient>
            <linearGradient id="c-tail" gradientUnits="userSpaceOnUse" x1="1180" y1="960" x2="1310" y2="1120"><stop offset="0" stop-color="#02a808" /><stop offset="1" stop-color="#014e03" /></linearGradient>
            <linearGradient id="c-nose" gradientUnits="userSpaceOnUse" x1="1350" y1="750" x2="1500" y2="870"><stop offset="0" stop-color="#02aa08" stop-opacity="0" /><stop offset="1" stop-color="#014a03" /></linearGradient>
            <linearGradient id="c-pillar" gradientUnits="userSpaceOnUse" x1="850" y1="560" x2="860" y2="740"><stop offset="0" stop-color="#30c838" /><stop offset=".6" stop-color="#02a209" /><stop offset="1" stop-color="#028a08" /></linearGradient>
            <radialGradient id="c-shine"><stop offset="0" stop-color="#38d43c" stop-opacity=".65" /><stop offset="1" stop-color="#10b818" stop-opacity="0" /></radialGradient>
            <linearGradient id="c-cup" x1="0" y1="0" x2="1" y2="0"><stop offset="0" stop-color="#02a008" /><stop offset=".5" stop-color="#028007" /><stop offset="1" stop-color="#014a03" /></linearGradient>
            <clipPath id="c-clip"><path d="M395 58C430 48 480 48 505 54C560 66 600 85 650 110L800 175L840 190L855 190L985 250L985 268C1020 275 1060 300 1105 330L1135 338C1200 375 1290 410 1350 440C1380 455 1395 475 1408 492C1450 520 1480 560 1495 595C1520 630 1528 680 1524 720C1522 750 1515 790 1490 840C1450 930 1420 970 1397 1008L1350 1078C1320 1120 1270 1165 1225 1178L1210 1176C1210 1110 1170 1045 1100 1000C1060 975 1000 962 950 968C890 975 850 1000 833 1030L824 1048L778 1030L430 857L383 838C385 760 350 660 280 610C220 565 150 555 100 572C80 578 65 590 52 617L40 605C33 560 42 510 60 455C80 400 120 340 163 262C180 230 225 180 255 148L305 125C330 95 360 65 395 58Z" /></clipPath>
          </defs>

          <g class="car" transform="translate(520 420) scale(.3636 .3333)">
            <g class="edge">
              <path d="M163 262L156 235C160 205 180 198 215 198L190 245Z" fill="#047a08" />
              <path d="M60 462L42 428C38 395 60 385 110 382L85 440Z" fill="#047a08" />
              <path d="M42 425L60 462L80 430L60 418Z" fill="#013c02" />
              <path d="M1495 820L1517 850L1521 888C1505 897 1480 895 1465 890L1480 850Z" fill="#016004" />
              <path d="M1495 820L1517 852L1478 852Z" fill="#20c028" />
              <path d="M1382 1008L1405 1045L1403 1082C1385 1086 1365 1083 1350 1078L1358 1040Z" fill="#016004" />
              <path d="M1382 1008L1403 1046L1360 1038Z" fill="#20c028" />
              <path d="M395 58C430 48 480 48 505 54C560 66 600 85 650 110L800 175L840 190L855 190L985 250L985 268C1020 275 1060 300 1105 330L1135 338C1200 375 1290 410 1350 440C1380 455 1395 475 1408 492C1450 520 1480 560 1495 595C1520 630 1528 680 1524 720C1522 750 1515 790 1490 840C1450 930 1420 970 1397 1008L1350 1078C1320 1120 1270 1165 1225 1178L1210 1176C1210 1110 1170 1045 1100 1000C1060 975 1000 962 950 968C890 975 850 1000 833 1030L824 1048L778 1030L430 857L383 838C385 760 350 660 280 610C220 565 150 555 100 572C80 578 65 590 52 617L40 605C33 560 42 510 60 455C80 400 120 340 163 262C180 230 225 180 255 148L305 125C330 95 360 65 395 58ZM460 602C400 550 388 480 398 440C410 400 440 340 460 305C500 240 540 195 590 175C620 163 650 158 685 170C715 195 725 230 733 272L700 322L633 450C570 490 510 540 460 602ZM882 572L1000 393L1175 482C1180 465 1200 450 1212 445C1232 470 1232 520 1215 560C1200 600 1180 640 1165 660C1130 720 1090 775 1050 795C1000 815 960 817 900 815Q892 690 882 572ZM831 334A20 14 0 1 0 871 334A20 14 0 1 0 831 334ZM803 389A18 12 0 1 0 839 389A18 12 0 1 0 803 389Z" fill="#02ab08" fill-rule="evenodd" />
            </g>
            <g clip-path="url(#c-clip)">
              <path d="M120 540C250 520 380 640 512 655L440 740L425 860L380 840C385 760 350 660 280 610C230 575 170 560 110 570Z" fill="url(#c-rear)" />
              <path d="M822 808C960 850 1080 860 1130 930L1100 1000C1060 975 1000 962 950 968C890 975 850 1000 824 1050L780 1035C805 950 822 880 822 808Z" fill="url(#c-front)" />
              <path d="M1262 712C1340 740 1400 790 1430 850C1440 900 1420 970 1397 1008L1520 840V600C1480 700 1400 720 1262 712Z" fill="url(#c-nose)" />
              <path d="M1100 1000C1180 1000 1215 960 1230 940L1345 990L1350 1078C1320 1120 1270 1165 1210 1178C1210 1110 1170 1045 1100 1000Z" fill="url(#c-tail)" />
              <path d="M40 605C33 560 42 510 60 540L100 572C80 578 65 590 52 617Z" fill="#015004" />
              <ellipse cx="170" cy="505" rx="100" ry="55" fill="url(#c-shine)" />
              <ellipse cx="1150" cy="935" rx="100" ry="75" fill="url(#c-shine)" />
              <ellipse cx="1330" cy="830" rx="90" ry="130" fill="url(#c-shine)" opacity=".7" />
              <ellipse cx="1400" cy="640" rx="70" ry="130" fill="url(#c-shine)" opacity=".4" />
            </g>
            <path d="M460 602C510 540 570 490 633 450L672 518C610 555 555 600 512 655Z" fill="#04a40a" />
            <ellipse cx="625" cy="495" rx="60" ry="34" fill="url(#c-shine)" />
            <path d="M512 655C560 600 620 555 672 518L800 575C815 640 824 720 822 808C720 790 610 740 512 655Z" fill="url(#c-glass)" />
            <path d="M425 857C430 800 435 760 455 725C475 695 495 675 512 655C610 740 720 790 822 808C820 880 800 960 782 1030Z" fill="url(#c-door)" />
            <path d="M800 575L810 556L882 572Q892 690 900 815L822 808C824 720 815 640 800 575Z" fill="url(#c-pillar)" />
            <g class="edge">
              <path d="M685 170L740 163C765 178 778 198 773 215L733 272C725 230 715 195 685 170Z" fill="#045c08" />
              <path d="M1000 393L1008 362C1050 330 1110 335 1135 345C1180 370 1205 410 1212 445C1195 455 1180 465 1175 482Z" fill="#045808" />
              <path d="M1132 462V385L1205 420M1140 390L1190 470" />
              <path d="M683 465L852 190L985 252V268L810 556L680 492Z" fill="#02640a" />
              <path d="M685 463L852 192L983 252L817 525Z" fill="#02a80a" />
              <path d="M700 455L856 205M815 525L812 553" />
              <ellipse cx="851" cy="330" rx="23" ry="20" fill="#024e04" /><ellipse cx="852" cy="336" rx="18" ry="12" fill="#d4d5d7" />
              <ellipse cx="821" cy="383" rx="22" ry="19" fill="#024e04" /><ellipse cx="820" cy="390" rx="18" ry="12" fill="#d5d6d8" />
              <path d="M57 540C52 490 90 400 130 375C160 368 185 390 180 415C160 450 90 520 57 540Z" fill="#028a08" />
              <path d="M130 375C160 368 185 390 180 415L95 485L75 470Z" fill="url(#c-cup)" />
              <path d="M305 125C330 95 360 65 393 60C392 90 360 115 305 125Z" fill="#05720a" />
              <path d="M1435 600C1450 575 1480 580 1495 600C1525 640 1530 720 1510 775C1480 740 1440 680 1435 600Z" fill="url(#c-cup)" />
              <path d="M1450 600C1485 620 1500 690 1495 745M1440 640C1465 640 1470 665 1460 688" />
              <path d="M1218 965C1235 915 1290 905 1315 935C1350 980 1345 1050 1310 1105C1290 1135 1260 1135 1240 1105C1218 1065 1212 1010 1218 965Z" fill="url(#c-cup)" />
              <path d="M1268 925C1300 980 1295 1060 1258 1112M1290 1060L1322 1080M1222 1000C1250 1000 1258 1030 1232 1045" />
              <path d="M1221 996Q1244 1015 1226 1037Z" fill="#e0e2e4" />
            </g>
            <g class="seam">
              <path d="M505 56C450 130 400 210 357 272C290 370 220 480 195 568" />
              <path d="M163 262C220 225 270 245 357 272L456 308M702 322L757 340M905 410L958 445" />
              <path d="M1408 492C1340 580 1300 660 1262 712C1200 800 1130 900 1100 1000M1165 655L1262 712C1350 745 1440 830 1432 910C1430 940 1420 970 1405 990" />
              <path d="M743 525C720 600 660 740 632 820C620 860 608 890 606 918" />
              <path d="M820 810L900 815" />
            </g>
            <g class="rim">
              <path d="M425 857C430 800 435 760 455 725C480 690 505 665 512 655C560 600 620 555 672 518L800 577C815 640 824 720 822 808C820 880 800 950 785 1030" />
              <path d="M460 305C500 240 540 190 590 168C650 145 710 155 740 163M733 272L633 450" class="thin" />
              <path d="M1008 362L882 572L898 815M1135 345C1190 360 1240 450 1225 530" class="thin" />
            </g>
          </g>

          <g class="triad">
            <path d="M550 786L586 802" stroke="#2a9a38" stroke-width="2" /><path d="M549 786L566 790L562 796Z" fill="#1f8a2c" />
            <path d="M591 802L595 776" stroke="#10309a" stroke-width="2" /><path d="M596 774L591 790L598 790Z" fill="#10309a" />
            <path d="M591 802L607 778" stroke="#e05048" stroke-width="2" /><path d="M609 775L597 787L603 791Z" fill="#e05048" />
            <text x="551" y="783" fill="#4a9a50">YC</text><text x="580" y="774" fill="#2a5ad8">ZC</text><text x="594" y="774" fill="#e05048">XC</text>
            <path d="M333 923L342 909L364 919L360 937L331 940ZM333 923L358 932L364 919M342 909L337 925L331 940" fill="#d2d4d4" stroke="#aaa" />
            <path d="M350 949L318 934" stroke="#1f8a2c" stroke-width="2.500" /><path d="M315 933L328 935L324 941Z" fill="#1f8a2c" />
            <path d="M352 949L355 926" stroke="#10309a" stroke-width="3" /><path d="M355 920L351 932H359Z" fill="#10309a" />
            <path d="M352 949L366 928" stroke="#e05048" stroke-width="2" /><path d="M368 924L360 932L366 935Z" fill="#e05048" />
            <circle cx="351" cy="950" r="3" fill="#aaa" />
            <text x="308" y="937" fill="#3a9a48">Y</text><text x="353" y="924" fill="#2a5ad8">Z</text><text x="366" y="926" fill="#e05048">X</text>
          </g>
        </svg>
      </section>

      <aside class="right">
        <div class="rcol">
          <span class="vgrip"></span>
          {#each rightA as t}{@render tool(t)}{/each}
          <div class="foot low"><i class="arrow"></i><svg viewBox="0 0 8 10"><path d="M1 1L4 4L7 1M1 5L4 8L7 5" /></svg></div>
        </div>
        <div class="rcol second">
          <span class="vgrip"></span>
          {#each rightB as t}{@render tool(t)}{/each}
          <div class="foot end"><i class="arrow"></i></div>
        </div>
      </aside>
    </main>

    {@render bar(bottom, 'bottom')}

    <footer class="status">
      <p>选择对象并使用 MB3，或者双击某一对象</p>
      <span></span><span></span>
      <div class="tray"><i class="chip"></i><i class="mon"></i></div>
    </footer>
    <div class="taskedge"></div>

    <div class="dock">
      {#each dock as d}<button>{d}</button>{/each}
      <button class="power" aria-label="退出"><svg viewBox="0 0 20 20"><path d="M5 3A8 8 0 1 0 15 3M10 1V9" fill="none" stroke="#b4b7ba" stroke-width="2" /></svg></button>
    </div>

    <div class="ime">
      <b class="sogou">S</b>
      <span class="zh">中</span>
      <svg viewBox="0 0 20 20"><circle cx="6" cy="7" r="2.500" fill="none" stroke="#1c6ab8" stroke-width="1.500" /><path d="M13 11h4q1 5-3 7" fill="#1c6ab8" /></svg>
      <svg viewBox="0 0 20 20"><circle cx="10" cy="10" r="7.500" fill="none" stroke="#1c6ab8" stroke-width="1.800" /><circle cx="7" cy="8" r="1.200" fill="#1c6ab8" /><circle cx="13" cy="8" r="1.200" fill="#1c6ab8" /><path d="M6 12q4 4 8 0" fill="none" stroke="#1c6ab8" stroke-width="1.500" /></svg>
      <svg viewBox="0 0 20 20"><rect x="7" y="2" width="6" height="10" rx="3" fill="#1c6ab8" /><path d="M4 9q0 6 6 6t6-6M10 15v4M6 18h8" fill="none" stroke="#1c6ab8" stroke-width="2" /></svg>
      <svg viewBox="0 0 20 20"><rect x="2" y="4" width="16" height="12" rx="1" fill="#1c6ab8" /><path d="M4 7.500h12M4 10.500h12" stroke="#fff" stroke-width="1.500" stroke-dasharray="2 1" /><path d="M6 13.500h8" stroke="#fff" stroke-width="1.500" /></svg>
      <svg viewBox="0 0 20 20"><circle cx="10" cy="5" r="3.500" fill="#a9b6c4" /><path d="M3 16q0-7 7-7t7 7z" fill="#a9b6c4" /><rect x="11" y="11" width="6" height="8" fill="#fff" stroke="#a9b6c4" /></svg>
      <svg viewBox="0 0 20 20"><path d="M6 3q4 3 8 0l5 4-3 4-1-1v9H5v-9l-1 1-3-4z" fill="#1c6ab8" /></svg>
      <svg viewBox="0 0 20 20"><path d="M2 3h7v7H2zM11 3h7v7h-7zM2 12h7v7H2zM11 12h7v7h-7z" fill="#1c6ab8" /></svg>
    </div>

    <div class="capture"><i class="tl"></i><i class="tr"></i><i class="br"></i><i class="bl"></i></div>
    <button class="bubble" aria-label="展开">+</button>
  </div>
</div>

<style>
  :global(body) { background: #000; }
  .desk { height: 100vh; padding-inline: 10.3%; background: #000; overflow: hidden; box-sizing: border-box; }
  .desk, button, select { font-family: "DejaVu Sans Mono", "Noto Sans CJK SC", sans-serif; }
  .window { position: relative; display: flex; flex-direction: column; height: 100%; overflow: hidden; background: #d8d8d8; color: #111; }
  button { display: flex; align-items: center; margin: 0; padding: 0; border: 0; background: none; color: inherit; font-size: 12px; white-space: nowrap; }
  .ic { flex: none; width: 24px; height: 24px; display: block; overflow: visible; font-family: "Liberation Sans", sans-serif; font-weight: bold; }

  .wallpaper { flex: none; height: 8px; position: relative; background: linear-gradient(90deg, #d8d870, #e8e48a 30%, #f8ecc0 55%, #f4e8b0 65%, #b4b450 80%, #f0f0d8 87%, #98a838 92%, #b8b850); }
  .handle { position: absolute; left: 47.4%; top: 0; width: 63px; height: 7px; background: radial-gradient(circle at 2px 2px, #fff 1px, #e2503c 1px) 0 0 / 4px 4px; }

  .title { flex: none; display: flex; align-items: center; height: 31px; padding: 0 1px 3px 2px; box-sizing: border-box; background: linear-gradient(#555 0, #666 4px, #4c4c4c 11px, #1c1c1c 11px, #1a1a1a); }
  .title .ic { width: 18px; height: 18px; }
  .title h1 { flex: 1; margin: 0 0 0 4px; font: 12px/20px "Noto Sans CJK SC", sans-serif; color: #6c6c6c; }
  .title strong { font: bold 14px/16px "Open Sans", "Liberation Sans", sans-serif; font-weight: 800; color: #fff; margin-right: 26px; }
  .winbtns { display: flex; gap: 3px; }
  .winbtns button { width: 20px; height: 20px; background: linear-gradient(#4a4a4a, #2c2c2c); border-radius: 2px; }
  .winbtns svg { width: 20px; height: 20px; }

  .menu { flex: none; display: flex; align-items: center; height: 24px; padding: 0 5px 0 2px; background: linear-gradient(90deg, #dadada, #e6e6e6); }
  .menu .ic { width: 17px; height: 17px; margin: 0 3px 0 1px; }
  .items { display: flex; justify-content: space-between; width: 60%; }
  .items button { font-size: 12px; font-family: "Noto Sans CJK SC", sans-serif; }
  .items span { font: 10px/18px "DejaVu Sans Mono", monospace; }
  .items button:nth-child(n+13) { font: 10px/18px "DejaVu Sans Mono", monospace; }
  .docbtns { display: flex; gap: 2px; margin-left: auto; }
  .docbtns button { width: 18px; height: 18px; border: 1px solid #777; border-radius: 3px; background: #efefef; box-sizing: border-box; }
  .docbtns svg { width: 16px; height: 16px; }

  .bar { flex: none; display: grid; height: 36px; background: linear-gradient(#e2e2e2, #cecece); border-top: 1px solid #bcbcbc; box-sizing: border-box; }
  .main { grid-template-columns: 488fr 371fr 286fr 379fr; }
  .feature { grid-template-columns: 804fr 249fr 120fr 351fr; }
  .bottom { height: 38px; padding-bottom: 2px; grid-template-columns: 1070fr 282fr 151fr 21fr; border-top-color: #fff; }
  .group { display: flex; align-items: center; min-width: 0; border-right: 1px solid #b4b4b4; box-shadow: inset 0 1px #f0f0f0, inset 1px 0 #f0f0f0; }
  .main .group:last-child { border-right: 0; }
  .grip { flex: none; width: 3px; height: 24px; margin: 0 1px 0 4px; background: radial-gradient(circle at 1px 1px, #fff 1px, #a4a4a4 1px, transparent 2px) 0 0 / 3px 4px; }
  .tool { flex: 1 1 32px; justify-content: center; min-width: 0; height: 32px; }
  .drop { flex-basis: 45px; gap: 8px; }
  .caret { flex: none; width: 0; height: 0; border: 3px solid transparent; border-top: 4px solid #111; border-bottom: 0; }
  .sep { flex: none; width: 1px; height: 32px; margin: 0 2px 0 3px; background: #f4f4f4; box-shadow: -1px 0 #bbb; }
  .space { flex: none; width: 16px; }
  .more { flex: none; width: 14px; height: 28px; flex-direction: column; justify-content: flex-end; padding-bottom: 3px; box-sizing: border-box; gap: 12px; }
  .chev { width: 9px; height: 7px; }
  .chev path, .foot path { fill: none; stroke: #111; stroke-width: 1.5; }
  .start { flex: none; width: 70px; padding-left: 4px; gap: 4px; box-sizing: border-box; }
  .find { flex: none; width: 94px; padding-left: 2px; gap: 4px; box-sizing: border-box; }

  .selection { flex: none; display: flex; align-items: center; height: 31px; padding: 0 7px 2px 6px; box-sizing: border-box; border-top: 1px solid #a0a0a0; border-bottom: 2px solid #8e8e8e; background: linear-gradient(#cecece, #dedede); }
  select { appearance: none; height: 18px; margin: 0 9px 0 0; padding: 0 20px 0 2px; border: 1px solid #7c8a98; border-radius: 0; color: #111; font-size: 12px; line-height: 16px; background: linear-gradient(45deg, transparent 50%, #14202c 0) right 9px top 5px / 6px 6px no-repeat, linear-gradient(-45deg, transparent 50%, #14202c 0) right 3px top 5px / 6px 6px no-repeat, linear-gradient(#c8e4fa, #5a9cd8) right / 17px 16px no-repeat, #fff; }
  .filter { width: 114px; }
  .scope { width: 120px; margin-right: 4px; }
  .selection .tool { flex: none; width: 24px; height: 24px; }
  .selection .drop { width: 33px; gap: 3px; justify-content: flex-start; padding-left: 2px; box-sizing: border-box; }
  .selection .ic { width: 18px; height: 18px; }
  .selection .boxed { background: #fdfdfd; border: 1px solid #666; border-radius: 2px; box-sizing: border-box; height: 23px; }
  .selection .sep { height: 24px; margin: 0 3px; }
  .last { margin: 10px 0 0 auto; }

  main { flex: 1; display: flex; min-height: 0; background: #dadada; }
  .rail { flex: none; width: 34px; padding-top: 17px; display: flex; flex-direction: column; align-items: flex-end; gap: 3px; box-sizing: border-box; background: linear-gradient(90deg, #a0a0a0, #bcbcbc); border-top: 1px solid #fff; border-right: 1px solid #777; }
  .rail button { width: 28px; height: 41px; justify-content: center; background: linear-gradient(90deg, #e4e4e4, #c8c8c8); border: 1px solid #757575; border-right: 0; border-radius: 4px 0 0 4px; box-sizing: border-box; }
  .rail .far { margin-top: 12px; }
  .rail .on { margin: 10px 0 -3px; height: 45px; width: 30px; background: #efefef; }
  .strip { flex: none; width: 10px; background: linear-gradient(90deg, #f6f6f6, #e4e4e4); }
  .left { flex: none; width: 49px; box-sizing: border-box; border-right: 2px solid #808080; background: #cbcbcb; }
  .vgroup { display: flex; flex-direction: column; align-items: center; background: #dedede; border-bottom: 1px solid #a8a8a8; padding-top: 3px; }
  .vgroup .tool { flex: none; width: 32px; height: 32px; }
  .vgroup .drop { width: 48px; gap: 6px; padding-left: 8px; box-sizing: border-box; }
  .vgrip { flex: none; width: 36px; height: 3px; margin-bottom: 2px; background: radial-gradient(circle at 2px 1px, #999 1px, transparent 2px) 0 0 / 4px 3px; }
  .arrow { width: 0; height: 0; border: 3px solid transparent; border-right: 4px solid #111; border-left: 0; }
  .vgroup .arrow { align-self: flex-start; margin: 4px 0 6px 6px; }
  .canvas { flex: 1; min-width: 0; background: linear-gradient(#b6b7b9, #cfd0d2 30%, #e1e3e5 68%, #e6e8ea 74%, #e7e9ea); }
  .scene { display: block; width: 100%; height: 100%; }
  .edge path, .edge ellipse { stroke: #1c3c1c; stroke-width: 1.2; vector-effect: non-scaling-stroke; }
  .edge path:not([fill]) { fill: none; }
  .seam path { fill: none; stroke: #063c08; stroke-width: 1; vector-effect: non-scaling-stroke; }
  .rim path { fill: none; stroke: #1e3c20; stroke-width: 3; vector-effect: non-scaling-stroke; }
  .rim .thin { stroke-width: 2; stroke: #14501a; }
  .triad text { font: 11px "Liberation Sans", sans-serif; }

  .right { flex: none; display: grid; grid-template-columns: 35px 1fr; width: 72px; border-left: 2px solid #f4f4f4; box-sizing: border-box; background: #cfcfcf; }
  .rcol { display: grid; grid-template-rows: 5px repeat(25, minmax(0, 1fr)) 32px; justify-items: center; align-items: center; padding-top: 2px; min-height: 0; background: linear-gradient(#dedede, #d0d0d0); border-right: 1px solid #c0c0c0; }
  .second { background: #cfcfcf linear-gradient(#dedede, #d6d6d6) 0 0 / 100% 442px no-repeat; border-right: 0; }
  .rcol .vgrip { width: 24px; margin: 0; }
  .rcol .tool { height: 24px; }
  .foot { display: flex; justify-content: space-between; align-items: center; width: 24px; }
  .foot svg { width: 8px; height: 10px; }
  .foot.low { padding-top: 12px; }
  .foot.end { align-self: start; padding-top: 4px; }

  .status { flex: none; display: flex; height: 21px; background: linear-gradient(#e0e0e0, #d2d2d2); }
  .status p { flex: 1; margin: 0; padding-left: 3px; font: bold 13px/18px "Noto Sans CJK SC", sans-serif; }
  .status span { width: 20px; border-left: 1px solid #fff; box-shadow: -1px 0 #bbb; }
  .tray { display: flex; gap: 6px; width: 76px; padding: 3px 0 0 20px; box-sizing: border-box; }
  .chip { width: 16px; height: 12px; background: #8c8884; }
  .mon { width: 9px; height: 9px; border: 2px solid #444; background: #6aa0d8; box-sizing: content-box; }
  .taskedge { flex: none; height: 9px; background: linear-gradient(#555, #1c1c1c 3px, #111); }

  .dock { position: absolute; left: 0; bottom: 0; display: flex; align-items: flex-start; gap: 32px; width: 569px; height: 17px; background: #40444c; border-radius: 0 6px 0 0; overflow: hidden; }
  .dock button { font: 12px/18px "Noto Sans CJK SC", sans-serif; color: #b4b7ba; padding-top: 5px; }
  .dock .power { margin-left: auto; margin-right: 9px; padding-top: 5px; }
  .power svg { width: 20px; height: 20px; }

  .ime { position: absolute; right: 0; bottom: 0; display: flex; align-items: center; gap: 3px; height: 19px; width: 187px; padding-left: 14px; box-sizing: border-box; background: #fff; }
  .ime svg { flex: none; width: 20px; height: 20px; margin-top: 4px; }
  .zh { flex: none; width: 20px; font: bold 16px/20px "Noto Sans CJK SC", sans-serif; color: #1c6ab8; }
  .sogou { position: absolute; left: -17px; top: -3px; width: 26px; height: 26px; border-radius: 4px; background: #f0622c; color: #fff; font: italic bold 25px/26px "Liberation Sans", sans-serif; text-align: center; rotate: -8deg; }

  .capture { position: absolute; inset: 6px 2px 21px 0; border: 1px solid #e8503c; border-left: 0; pointer-events: none; }
  .capture i { position: absolute; background: #f02010; }
  .capture .tl { left: 0; top: -3px; width: 8px; height: 4px; }
  .capture .tr { right: -3px; top: -3px; width: 4px; height: 26px; }
  .capture::before { content: ""; position: absolute; right: -1px; top: -3px; width: 24px; height: 3px; background: #f02010; }
  .capture::after { content: ""; position: absolute; right: -1px; bottom: -2px; width: 24px; height: 3px; background: #f02010; }
  .capture .br { right: -3px; bottom: -2px; width: 4px; height: 25px; }
  .capture .bl { left: 0; bottom: -3px; width: 8px; height: 4px; }
  .bubble { position: absolute; right: -32px; top: 475px; width: 45px; height: 45px; border: 2px solid #dcdcdc; border-radius: 50%; background: #2e9448; color: #fff; font: bold 22px/40px "Liberation Sans", sans-serif; padding-left: 3px; box-sizing: border-box; }
</style>
